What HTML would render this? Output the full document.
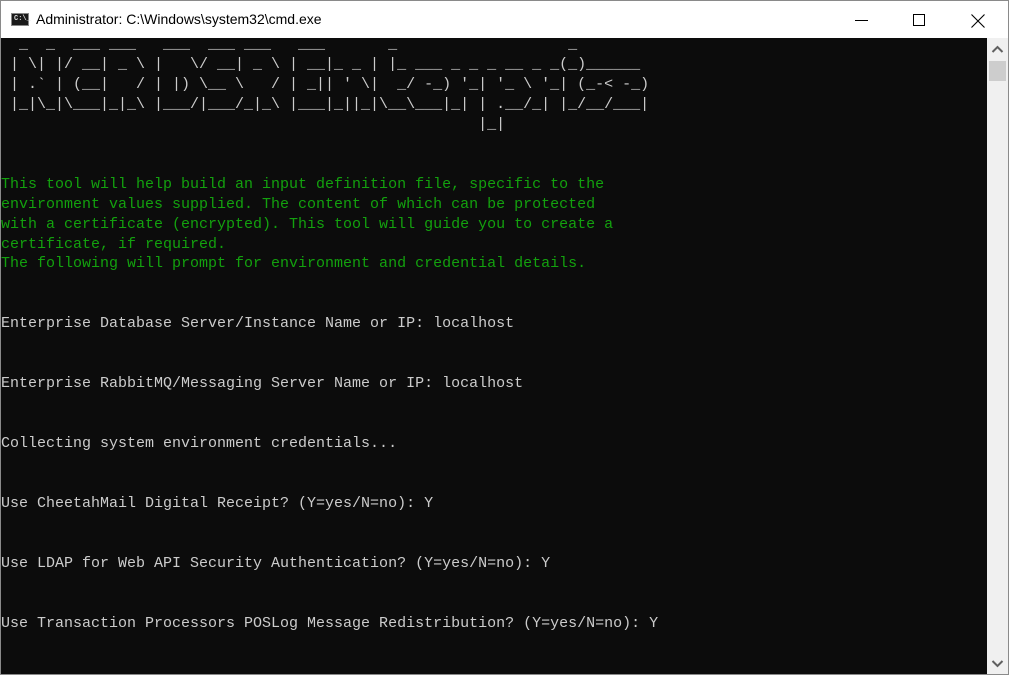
<!DOCTYPE html>
<html><head><meta charset="utf-8"><style>
html,body{margin:0;padding:0;width:1009px;height:675px;overflow:hidden;background:#fff;}
.win{position:absolute;left:0;top:0;width:1007px;height:673px;border:1px solid #8a8a8a;background:#fff;}
.title{position:absolute;left:0;top:0;width:1007px;height:37px;background:#fff;}
.title .t{position:absolute;left:35px;top:10px;font:14px "Liberation Sans",sans-serif;color:#000;}
.icon{position:absolute;left:10px;top:12px;width:18px;height:13px;background:#1a1a1a;border:1px solid #888;box-sizing:border-box;}
.icon span{position:absolute;left:2px;top:1px;font:bold 7px "Liberation Mono",monospace;color:#ddd;}
.con{position:absolute;left:0;top:37px;width:986px;height:636px;background:#0c0c0c;overflow:hidden;}
pre{margin:0;padding:0;position:absolute;left:0;top:-3px;font:15px/19.95px "Liberation Mono",monospace;color:#cccccc;white-space:pre;}
.g{color:#13a10e;}
.sb{position:absolute;left:986px;top:37px;width:21px;height:636px;background:#f0f0f0;}
.thumb{position:absolute;left:2px;top:23px;width:17px;height:20px;background:#cdcdcd;}
</style></head><body>
<div class="win">
<div class="title">
<div class="icon"><span>C:\_</span></div>
<div class="t">Administrator: C:\Windows\system32\cmd.exe</div>
<svg style="position:absolute;left:853px;top:12px" width="16" height="16"><line x1="1" y1="7.5" x2="14" y2="7.5" stroke="#000" stroke-width="1"/></svg>
<svg style="position:absolute;left:911px;top:12px" width="14" height="14"><rect x="1.5" y="1.5" width="11" height="11" fill="none" stroke="#000" stroke-width="1"/></svg>
<svg style="position:absolute;left:969px;top:12px" width="16" height="16"><path d="M1.5 1.5 L14.5 14.5 M14.5 1.5 L1.5 14.5" stroke="#000" stroke-width="1.1"/></svg>
</div>
<div class="con"><pre>  _  _  ___ ___   ___  ___ ___   ___       _                   _
 | \| |/ __| _ \ |   \/ __| _ \ | __|_ _ | |_ ___ _ _ _ __ _ _(_)______
 | .` | (__|   / | |) \__ \   / | _|| ' \|  _/ -_) '_| '_ \ '_| (_-&lt; -_)
 |_|\_|\___|_|_\ |___/|___/_|_\ |___|_||_|\__\___|_| | .__/_| |_/__/___|
                                                     |_|


<span class="g">This tool will help build an input definition file, specific to the
environment values supplied. The content of which can be protected
with a certificate (encrypted). This tool will guide you to create a
certificate, if required.
The following will prompt for environment and credential details.</span>


Enterprise Database Server/Instance Name or IP: localhost


Enterprise RabbitMQ/Messaging Server Name or IP: localhost


Collecting system environment credentials...


Use CheetahMail Digital Receipt? (Y=yes/N=no): Y


Use LDAP for Web API Security Authentication? (Y=yes/N=no): Y


Use Transaction Processors POSLog Message Redistribution? (Y=yes/N=no): Y
</pre></div>
<div class="sb">
<svg style="position:absolute;left:4px;top:7px" width="13" height="9"><path d="M1.5 7 L6.5 2 L11.5 7" fill="none" stroke="#606060" stroke-width="2"/></svg>
<div class="thumb"></div>
<svg style="position:absolute;left:4px;top:621px" width="13" height="9"><path d="M1.5 2 L6.5 7 L11.5 2" fill="none" stroke="#606060" stroke-width="2"/></svg>
</div>
</div>
</body></html>
